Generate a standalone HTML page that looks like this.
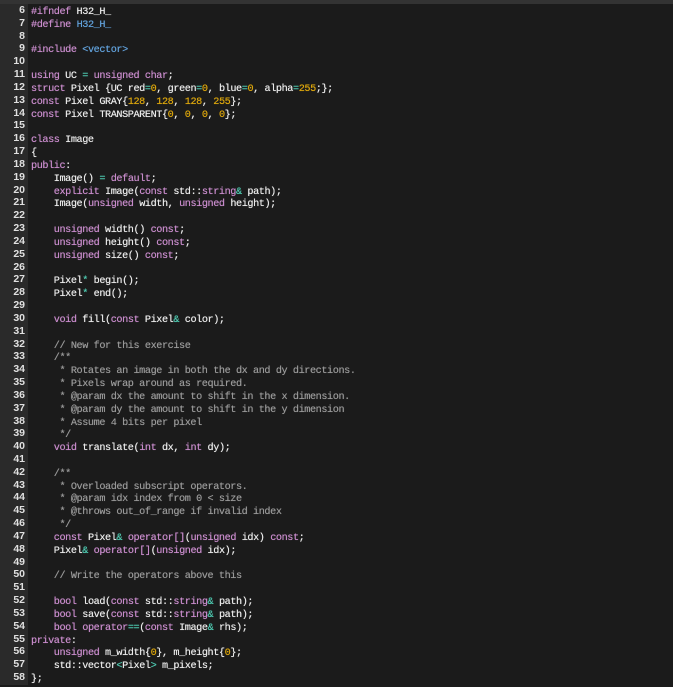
<!DOCTYPE html>
<html><head><meta charset="utf-8"><style>
html,body{margin:0;padding:0;background:#1b1b1b;width:673px;height:685px;overflow:hidden}
.top{position:absolute;left:0;top:0;width:673px;height:4px;background:#333}
.gut{position:absolute;left:0;top:4px;width:28px;height:681px;background:#2a2a2a}
pre{position:absolute;margin:0;top:7px;font-family:"Liberation Mono",monospace;font-size:10.2px;letter-spacing:-0.42px;line-height:12.83px;color:#ececec;text-shadow:0 0 0.5px currentColor}
.ln{left:0;top:4px;width:25px;text-align:right;color:#e0e0e0;font-family:"Liberation Sans",sans-serif;font-size:10.5px;letter-spacing:0;font-weight:bold;text-shadow:none}
.code{left:31px}
.k{color:#c98ccc}.m{color:#62a2dc}.n{color:#dba50c}.o{color:#4ec9b0}.c{color:#999}
</style></head><body>
<div class="top"></div><div class="gut"></div>
<pre class="ln">6
7
8
9
10
11
12
13
14
15
16
17
18
19
20
21
22
23
24
25
26
27
28
29
30
31
32
33
34
35
36
37
38
39
40
41
42
43
44
45
46
47
48
49
50
51
52
53
54
55
56
57
58</pre>
<pre class="code"><span class="k">#ifndef</span> H32_H_
<span class="k">#define</span> <span class="m">H32_H_</span>

<span class="k">#include</span> <span class="m">&lt;vector&gt;</span>

<span class="k">using</span> UC <span class="o">=</span> <span class="k">unsigned char</span>;
<span class="k">struct</span> Pixel {UC red<span class="o">=</span><span class="n">0</span>, green<span class="o">=</span><span class="n">0</span>, blue<span class="o">=</span><span class="n">0</span>, alpha<span class="o">=</span><span class="n">255</span>;};
<span class="k">const</span> Pixel GRAY{<span class="n">128</span>, <span class="n">128</span>, <span class="n">128</span>, <span class="n">255</span>};
<span class="k">const</span> Pixel TRANSPARENT{<span class="n">0</span>, <span class="n">0</span>, <span class="n">0</span>, <span class="n">0</span>};

<span class="k">class</span> Image
{
<span class="k">public</span>:
    Image() <span class="o">=</span> <span class="k">default</span>;
    <span class="k">explicit</span> Image(<span class="k">const</span> std::<span class="k">string</span><span class="o">&amp;</span> path);
    Image(<span class="k">unsigned</span> width, <span class="k">unsigned</span> height);

    <span class="k">unsigned</span> width() <span class="k">const</span>;
    <span class="k">unsigned</span> height() <span class="k">const</span>;
    <span class="k">unsigned</span> size() <span class="k">const</span>;

    Pixel<span class="o">*</span> begin();
    Pixel<span class="o">*</span> end();

    <span class="k">void</span> fill(<span class="k">const</span> Pixel<span class="o">&amp;</span> color);

    <span class="c">// New for this exercise</span>
    <span class="c">/**</span>
<span class="c">     * Rotates an image in both the dx and dy directions.</span>
<span class="c">     * Pixels wrap around as required.</span>
<span class="c">     * @param dx the amount to shift in the x dimension.</span>
<span class="c">     * @param dy the amount to shift in the y dimension</span>
<span class="c">     * Assume 4 bits per pixel</span>
<span class="c">     */</span>
    <span class="k">void</span> translate(<span class="k">int</span> dx, <span class="k">int</span> dy);

    <span class="c">/**</span>
<span class="c">     * Overloaded subscript operators.</span>
<span class="c">     * @param idx index from 0 &lt; size</span>
<span class="c">     * @throws out_of_range if invalid index</span>
<span class="c">     */</span>
    <span class="k">const</span> Pixel<span class="o">&amp;</span> <span class="k">operator[]</span>(<span class="k">unsigned</span> idx) <span class="k">const</span>;
    Pixel<span class="o">&amp;</span> <span class="k">operator[]</span>(<span class="k">unsigned</span> idx);

    <span class="c">// Write the operators above this</span>

    <span class="k">bool</span> load(<span class="k">const</span> std::<span class="k">string</span><span class="o">&amp;</span> path);
    <span class="k">bool</span> save(<span class="k">const</span> std::<span class="k">string</span><span class="o">&amp;</span> path);
    <span class="k">bool</span> <span class="k">operator</span><span class="o">==</span>(<span class="k">const</span> Image<span class="o">&amp;</span> rhs);
<span class="k">private</span>:
    <span class="k">unsigned</span> m_width{<span class="n">0</span>}, m_height{<span class="n">0</span>};
    std::vector<span class="o">&lt;</span>Pixel<span class="o">&gt;</span> m_pixels;
};</pre>
</body></html>
